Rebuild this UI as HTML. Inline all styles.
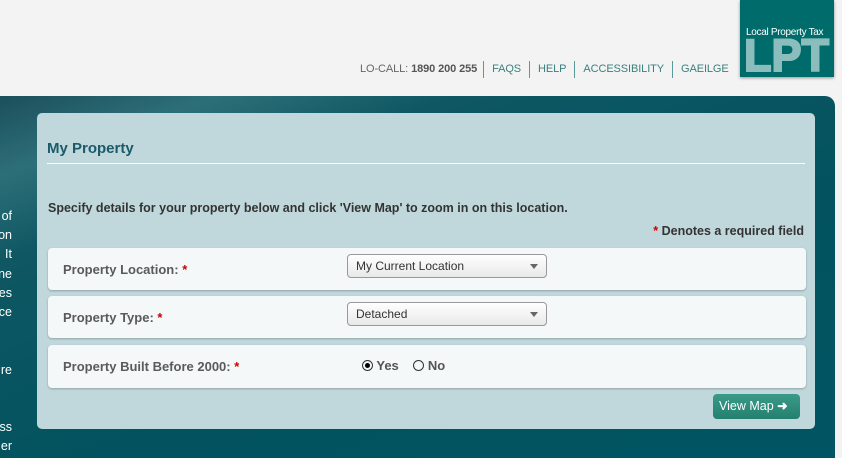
<!DOCTYPE html>
<html><head><style>
body{margin:0;width:842px;height:458px;overflow:hidden;background:#f3f3f3;font-family:"Liberation Sans",sans-serif;position:relative}
.abs{position:absolute}
.nav{top:61px;left:360px;font-size:11px;color:#666;white-space:nowrap;letter-spacing:-0.1px}
.nav span{display:inline-block;padding:0 8px;border-left:1px solid #5a9a9a;color:#3a8080;line-height:17px}
.nav b{color:#555}
.logo{left:740px;top:0;width:94px;height:77px;background:#006b6b;box-shadow:0 1px 3px rgba(0,0,0,.4)}
.bg{left:0;top:96px;width:835px;height:362px;border-top-right-radius:10px;background:linear-gradient(160deg,#1b4f5c 0%,#2d6f78 12%,#0e5763 25%,#02535f 60%,#015462 100%)}
.side{left:0;color:#fff;font-size:12.5px;width:12px;overflow:hidden;text-align:right;direction:rtl}
.panel{left:37px;top:113px;width:778px;height:316px;background:#c0d8dc;border-radius:5px}
.row{position:absolute;left:11px;width:758px;height:42px;background:#f4f8f9;border-radius:4px;box-shadow:0 1px 2px rgba(0,0,0,.25)}
.lbl{position:absolute;left:15px;top:14px;font-size:13px;font-weight:bold;color:#5a5a5a}
.req{color:#c00}
.sel{position:absolute;left:299px;top:6px;border:1px solid #999;border-radius:4px;background:linear-gradient(#fff,#e8e8e8);font-size:12px;color:#333;line-height:22px;padding-left:8px;box-sizing:border-box;width:200px;height:24px}
.sel:after{content:"";position:absolute;right:8px;top:9px;border:4px solid transparent;border-top:5px solid #666}
</style></head><body>
<div class="abs nav">LO-CALL: <b>1890 200 255</b>&nbsp;&nbsp;<span>FAQS</span><span>HELP</span><span>ACCESSIBILITY</span><span>GAEILGE</span></div>
<div class="abs logo">
<div class="abs" style="left:6px;top:27px;color:#fff;font-size:10px;letter-spacing:-0.3px">Local Property Tax</div>
<div class="abs" style="left:4px;top:34px;color:#8bbdbd;font-size:45px;font-weight:bold;letter-spacing:0px;line-height:44px;-webkit-text-stroke:2px #8bbdbd">LPT</div>
</div>
<div class="abs bg"></div>
<div class="abs side" style="top:207px;line-height:19.2px">of<br>on<br>It<br>ne<br>es<br>ce<br><br><br>re<br><br><br>ss<br>er</div>
<div class="abs panel">
<div class="abs" style="left:10px;top:27px;font-size:15px;font-weight:bold;color:#1a5a6a">My Property</div>
<div class="abs" style="left:10px;top:50px;width:758px;height:1px;background:#fff"></div>
<div class="abs" style="left:11px;top:88px;font-size:12.5px;font-weight:bold;color:#333">Specify details for your property below and click 'View Map' to zoom in on this location.</div>
<div class="abs" style="right:11px;top:111px;font-size:12.5px;font-weight:bold;color:#333"><span class="req">*</span> Denotes a required field</div>
<div class="row" style="top:135px"><div class="lbl">Property Location: <span class="req">*</span></div><div class="sel">My Current Location</div></div>
<div class="row" style="top:183px"><div class="lbl">Property Type: <span class="req">*</span></div><div class="sel">Detached</div></div>
<div class="row" style="top:232px;height:43px"><div class="lbl">Property Built Before 2000: <span class="req">*</span></div>
<div class="abs" style="left:314px;top:13px;font-size:13px;font-weight:bold;color:#555">
<span style="display:inline-block;width:9px;height:9px;border:1px solid #333;border-radius:50%;vertical-align:-1px;position:relative"><span style="position:absolute;left:2px;top:2px;width:5px;height:5px;background:#000;border-radius:50%"></span></span> Yes &nbsp;&nbsp;&nbsp;<span style="display:inline-block;width:9px;height:9px;border:1px solid #333;border-radius:50%;vertical-align:-1px"></span> No</div></div>
<div class="abs" style="left:676px;top:281px;width:87px;height:25px;background:linear-gradient(#3a9a88,#24806f);border-radius:4px;color:#fff;font-size:12.5px;line-height:25px;text-indent:6px">View Map <span style="font-weight:bold">&#10140;</span></div>
</div>
</body></html>
